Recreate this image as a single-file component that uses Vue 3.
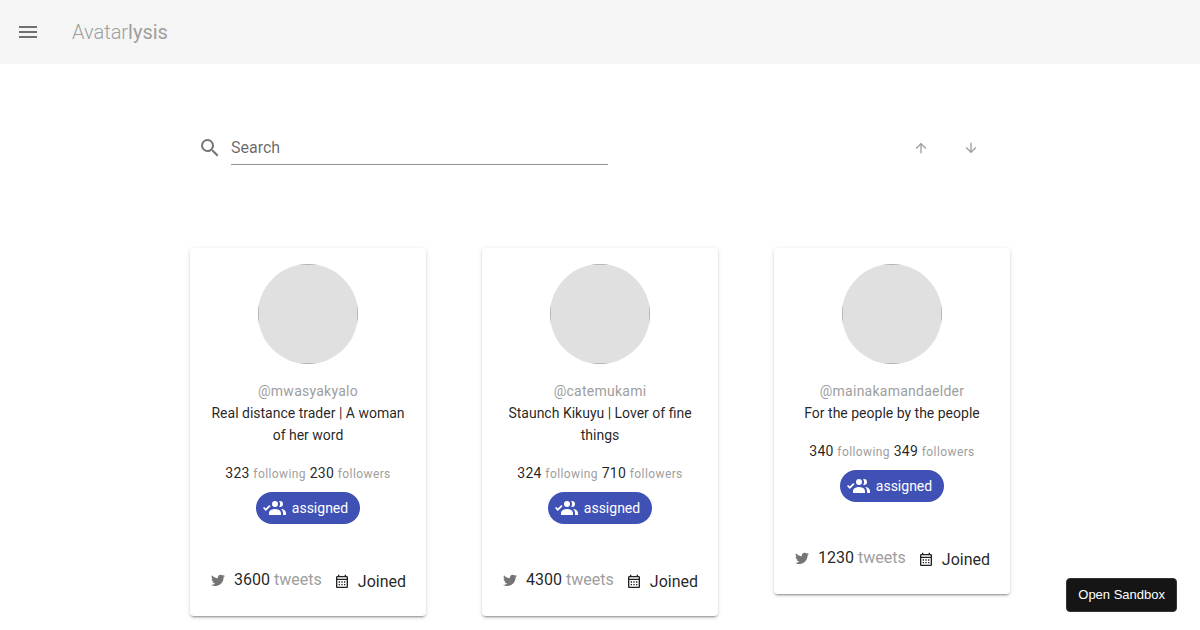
<template>
  <div class="app">
    <header class="app-bar">
      <button class="icon-btn" type="button" aria-label="Menu">
        <svg class="icon" viewBox="0 0 24 24"><path :d="icons.menu" /></svg>
      </button>
      <h1 class="title"><span class="thin">Avatar</span>lysis</h1>
    </header>

    <main class="content">
      <div class="toolbar">
        <label class="search">
          <svg class="icon" viewBox="0 0 24 24"><path :d="icons.magnify" /></svg>
          <input v-model="search" type="text" placeholder="Search" aria-label="Search" />
        </label>
        <div class="sort">
          <button type="button" aria-label="Sort ascending" @click="sortBy(1)">
            <svg class="icon small" viewBox="0 0 24 24"><path :d="icons.up" /></svg>
          </button>
          <button type="button" aria-label="Sort descending" @click="sortBy(-1)">
            <svg class="icon small" viewBox="0 0 24 24"><path :d="icons.down" /></svg>
          </button>
        </div>
      </div>

      <div class="cards">
        <article v-for="a in filtered" :key="a.handle" class="card">
          <div class="avatar"><div class="avatar-image"></div></div>
          <div class="handle">@{{ a.handle }}</div>
          <div class="bio">{{ a.bio }}</div>
          <div class="stats">
            {{ a.following }} <span class="caption">following</span> {{ a.followers }} <span class="caption">followers</span>
          </div>
          <button class="chip" type="button">
            <svg class="icon" viewBox="0 0 24 24"><path :d="icons.assigned" /></svg>
            assigned
          </button>
          <div class="card-footer">
            <div class="meta tweets">
              <svg class="icon small" viewBox="0 0 24 24"><path :d="icons.twitter" /></svg>
              <span>{{ a.tweets }} <span class="grey">tweets</span></span>
            </div>
            <div class="meta joined">
              <svg class="icon small" viewBox="0 0 24 24"><path :d="icons.calendar" /></svg>
              <span>Joined</span>
            </div>
          </div>
        </article>
      </div>
    </main>

    <button class="sandbox" type="button">Open Sandbox</button>
  </div>
</template>

<script setup>
import { ref, computed } from 'vue'

const search = ref('')

const avatars = ref([
  { handle: 'mwasyakyalo', bio: 'Real distance trader | A woman of her word', following: 323, followers: 230, tweets: 3600 },
  { handle: 'catemukami', bio: 'Staunch Kikuyu | Lover of fine things', following: 324, followers: 710, tweets: 4300 },
  { handle: 'mainakamandaelder', bio: 'For the people by the people', following: 340, followers: 349, tweets: 1230 },
])

const filtered = computed(() => avatars.value.filter(a => a.handle.includes(search.value.toLowerCase())))

function sortBy(dir) {
  avatars.value.sort((a, b) => (a.followers - b.followers) * dir)
}

const icons = {
  menu: 'M3,6H21V8H3V6M3,11H21V13H3V11M3,16H21V18H3V16Z',
  magnify:
    'M9.5,3A6.5,6.5 0 0,1 16,9.5C16,11.11 15.41,12.59 14.44,13.73L14.71,14H15.5L20.5,19L19,20.5L14,15.5V14.71L13.73,14.44C12.59,15.41 11.11,16 9.5,16A6.5,6.5 0 0,1 3,9.5A6.5,6.5 0 0,1 9.5,3M9.5,5C7,5 5,7 5,9.5C5,12 7,14 9.5,14C12,14 14,12 14,9.5C14,7 12,5 9.5,5Z',
  up: 'M13,20H11V8L5.5,13.5L4.08,12.08L12,4.16L19.92,12.08L18.5,13.5L13,8V20Z',
  down: 'M11,4H13V16L18.5,10.5L19.92,11.92L12,19.84L4.08,11.92L5.5,10.5L11,16V4Z',
  assigned:
    'M19 17V19H7V17S7 13 13 13 19 17 19 17M16 8A3 3 0 1 0 13 11A3 3 0 0 0 16 8M19.2 13.06A5.6 5.6 0 0 1 21 17V19H24V17S24 13.55 19.2 13.06M18 5A2.91 2.91 0 0 0 17.11 5.14A5 5 0 0 1 17.11 10.86A2.91 2.91 0 0 0 18 11A3 3 0 0 0 18 5M7.34 8.92L8.5 10.33L3.75 15.08L1 12.08L2.16 10.92L3.75 12.5L7.34 8.92',
  twitter:
    'M22.46,6C21.69,6.35 20.86,6.58 20,6.69C20.88,6.16 21.56,5.32 21.88,4.31C21.05,4.81 20.13,5.16 19.16,5.36C18.37,4.5 17.26,4 16,4C13.65,4 11.73,5.92 11.73,8.29C11.73,8.63 11.77,8.96 11.84,9.27C8.28,9.09 5.11,7.38 3,4.79C2.63,5.42 2.42,6.16 2.42,6.94C2.42,8.43 3.17,9.75 4.33,10.5C3.62,10.5 2.96,10.3 2.38,10V10.03C2.38,12.11 3.86,13.85 5.82,14.24C5.46,14.34 5.08,14.39 4.69,14.39C4.42,14.39 4.15,14.36 3.89,14.31C4.43,16 6,17.26 7.89,17.29C6.43,18.45 4.58,19.13 2.56,19.13C2.22,19.13 1.88,19.11 1.54,19.07C3.44,20.29 5.7,21 8.12,21C16,21 20.33,14.46 20.33,8.79C20.33,8.6 20.33,8.42 20.32,8.23C21.16,7.63 21.88,6.87 22.46,6Z',
  calendar:
    'M7 11H9V13H7V11M21 5V19C21 20.11 20.11 21 19 21H5C3.89 21 3 20.1 3 19V5C3 3.9 3.9 3 5 3H6V1H8V3H16V1H18V3H19C20.11 3 21 3.9 21 5M5 7H19V5H5V7M19 19V9H5V19H19M15 13V11H17V13H15M11 13V11H13V13H11M7 15H9V17H7V15M15 17V15H17V17H15M11 17V15H13V17H11Z',
}
</script>

<style>
body {
  background: #fff;
}
</style>

<style scoped>
.app {
  font-family: Roboto, sans-serif;
  font-size: 16px;
  line-height: 24px;
  color: rgba(0, 0, 0, 0.87);
}

button,
input {
  font: inherit;
  border: none;
  background: transparent;
  padding: 0;
}

button {
  cursor: pointer;
}

.icon {
  display: block;
  flex: none;
  width: 24px;
  height: 24px;
  fill: currentColor;
}

.icon.small {
  width: 16px;
  height: 16px;
}

.app-bar {
  display: flex;
  align-items: center;
  gap: 20px;
  height: 64px;
  padding: 0 4px;
  background: #f5f5f5;
}

.icon-btn {
  display: flex;
  align-items: center;
  justify-content: center;
  width: 48px;
  height: 48px;
  color: rgba(0, 0, 0, 0.54);
}

.title {
  margin: 0;
  font-size: 20px;
  font-weight: 400;
  color: #9e9e9e;
}

.thin {
  font-weight: 300;
}

.content {
  max-width: 820px;
  margin: 0 auto;
  padding: 66px 24px 14px;
}

.toolbar {
  display: flex;
  align-items: center;
  justify-content: space-between;
  padding: 0 14px 0 8px;
  margin-bottom: 83px;
}

.search {
  display: flex;
  align-items: center;
  gap: 9px;
  flex: 0 1 410px;
  min-width: 0;
  color: rgba(0, 0, 0, 0.54);
}

.search input {
  flex: 1;
  min-width: 0;
  height: 34px;
  border-bottom: 1px solid rgba(0, 0, 0, 0.42);
  color: rgba(0, 0, 0, 0.87);
  outline: none;
}

.search input::placeholder {
  color: rgba(0, 0, 0, 0.6);
  opacity: 1;
}

.sort {
  display: flex;
}

.sort button {
  display: flex;
  align-items: center;
  justify-content: center;
  width: 50px;
  height: 28px;
  color: #9e9e9e;
}

.cards {
  display: grid;
  grid-template-columns: repeat(3, 1fr);
  align-items: start;
  gap: 56px;
}

.card {
  display: flex;
  flex-direction: column;
  align-items: center;
  padding: 16px 16px 22px;
  border-radius: 4px;
  background: #fff;
  box-shadow:
    0 3px 1px -2px rgba(0, 0, 0, 0.2),
    0 2px 2px 0 rgba(0, 0, 0, 0.14),
    0 1px 5px 0 rgba(0, 0, 0, 0.12);
  font-size: 14px;
  line-height: 22px;
  text-align: center;
}

.avatar {
  width: 100px;
  height: 100px;
  border-radius: 50%;
  overflow: hidden;
  margin-bottom: 16px;
}

.avatar-image {
  box-sizing: border-box;
  height: 100%;
  border: 1px solid #b4b4b4;
  background: #e0e0e0;
}

.handle,
.caption,
.grey {
  color: #9e9e9e;
}

.handle,
.stats {
  letter-spacing: 0.0178571429em;
}

.stats {
  margin: 16px 0 8px;
}

.caption {
  font-size: 12px;
  line-height: 20px;
  letter-spacing: 0.0333333333em;
}

.chip {
  display: inline-flex;
  align-items: center;
  gap: 6px;
  height: 32px;
  padding: 0 12px 0 6px;
  border-radius: 16px;
  background: #3f51b5;
  color: #fff;
  font-size: 14px;
}

.card-footer {
  display: flex;
  align-items: center;
  justify-content: space-between;
  align-self: stretch;
  margin-top: 42px;
  padding: 0 4px;
  font-size: 16px;
  line-height: 24px;
}

.meta {
  display: flex;
  align-items: center;
  gap: 8px;
}

.tweets .icon {
  color: rgba(0, 0, 0, 0.54);
}

.joined {
  padding-top: 4px;
}

.sandbox {
  position: fixed;
  right: 23px;
  bottom: 18px;
  height: 34px;
  padding: 0 11px;
  border: 1px solid #343434;
  border-radius: 4px;
  background: #151515;
  color: #fff;
  font-family: 'Liberation Sans', sans-serif;
  font-size: 13px;
}

@media (max-width: 800px) {
  .cards {
    grid-template-columns: repeat(auto-fit, minmax(236px, 1fr));
    gap: 24px;
  }
}
</style>
